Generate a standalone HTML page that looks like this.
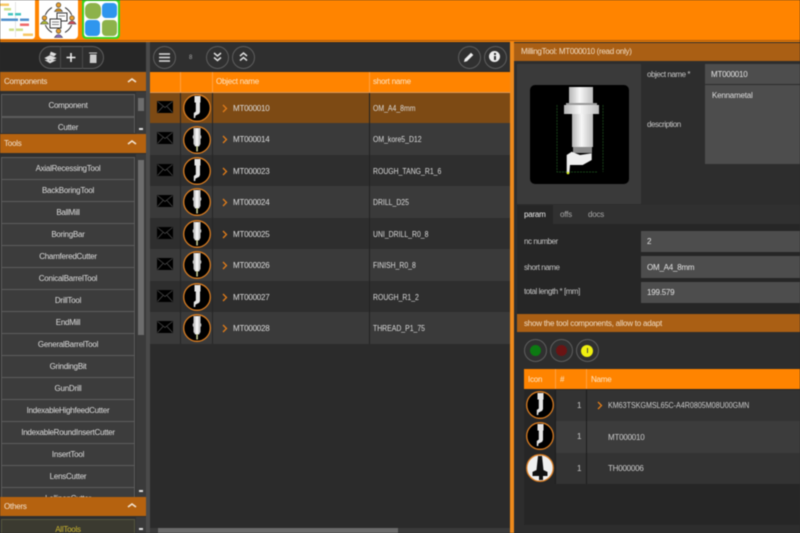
<!DOCTYPE html>
<html><head><meta charset="utf-8">
<style>
html,body{margin:0;padding:0;background:#2d2d2d}
#p{position:relative;width:800px;height:533px;overflow:hidden;background:#2b2b2b;font-family:"Liberation Sans",sans-serif;font-size:8px;color:#ddd;letter-spacing:-.22px;filter:blur(.4px)}
#p div,#p svg{position:absolute}
.t{white-space:nowrap;line-height:12px}
.l{letter-spacing:-.45px;color:#c4c4c4}
.s{transform:scaleX(.86);transform-origin:left center;letter-spacing:0}
.sec{left:0;width:146px;height:19px;background:#b5620f;color:#f2e2d0;font-size:8px;line-height:19px;text-indent:4px}
.sec svg{left:127px;top:5px}
.btn{left:1px;width:132px;height:21px;background:#3c3c3c;border:1px solid #5c5c5c;box-sizing:content-box;color:#ddd;text-align:center;line-height:21px;font-size:8px;letter-spacing:-.25px}
.rnd{width:21px;height:21px;border-radius:50%;border:1px solid #5e5e5e;background:#303030}
.row{left:150px;width:360px;height:31.5px}
.inp{background:#4d4d4d;color:#e4e4e4;font-size:8px}
</style></head><body><div id="p">
<svg width="0" height="0" style="position:absolute"><defs>
<g id="tool"><circle cx="14" cy="14" r="13.300" fill="#000" stroke="#d97d22" stroke-width="1.300"/><path d="M11.500 2h6v6.500h-.5V18l-.8 1.800-3.700 1.800-.3 2.400h-1.400v-5l2-1.500V8.500h-1.300z" fill="#e6e6e6"/></g>
<g id="tool2"><circle cx="14" cy="14" r="13.300" fill="#000" stroke="#d97d22" stroke-width="1.300"/><path d="M10.500 2h7v7l.8 1v2l-.8 1v5l-1.500 2.500h-3.800L10.500 18v-5l-.8-1v-2l.8-1z" fill="#c8c8c8"/><rect x="12.500" y="2" width="3" height="18" fill="#efefef"/><rect x="13.300" y="20" width="1.500" height="5.500" fill="#cfd59a"/></g>
<g id="mail"><rect x="0" y="0" width="16" height="12" fill="#000"/><path d="M.5.500L8 6.500 15.500.500M.5 11.500L6 5.500M15.500 11.500L10 5.500" fill="none" stroke="#4a4a4a" stroke-width=".8"/></g>
<path id="up" d="M1 5L5 2l4 3" fill="none" stroke="#f2e2d0" stroke-width="1.600"/>
<path id="chv" d="M1 1l3.500 3.500L1 8" fill="none" stroke="#e07c1a" stroke-width="1.300"/>
<linearGradient id="g" x1="0" x2="1"><stop offset="0" stop-color="#b4b4b4"/><stop offset=".45" stop-color="#f8f8f8"/><stop offset="1" stop-color="#bcbcbc"/></linearGradient>
</defs></svg>

<!-- header -->
<div style="left:0;top:0;width:800px;height:40px;background:#ff8400"></div>
<div style="left:0;top:40px;width:800px;height:1px;background:#a85a10"></div>
<div style="left:0;top:41px;width:800px;height:1.200px;background:#ff8400"></div>
<div style="left:0;top:0;width:35px;height:39px;background:#fff;border-radius:0 0 3px 0"></div>
<svg style="left:0;top:0" width="35" height="39"><rect x="15" y="2" width="1" height="35" fill="#e4e4e4"/><rect x="0" y="3.500" width="9" height="2.500" fill="#f7c766"/><rect x="4" y="8" width="7" height="2.500" fill="#cfe08a"/><rect x="8" y="13" width="5" height="2.500" fill="#45c4c0"/><rect x="15" y="13" width="6" height="2.500" fill="#45c4c0"/><rect x="1" y="18.500" width="17" height="2.500" fill="#4f8fcc"/><rect x="20" y="18.500" width="9" height="2.500" fill="#4f8fcc"/><rect x="20" y="23.500" width="9" height="2.500" fill="#ef6a6a"/><rect x="9" y="28.500" width="5" height="2.500" fill="#cfe08a"/><rect x="16" y="28.500" width="7" height="2.500" fill="#cfe08a"/><rect x="23" y="33.500" width="10" height="2.500" fill="#f7c766"/></svg>
<div style="left:39px;top:0;width:39px;height:39px;background:#fff;border-radius:0 0 4px 4px"></div>
<svg style="left:39px;top:0" width="39" height="39"><circle cx="19.500" cy="20" r="14" fill="none" stroke="#333" stroke-width="1"/>
<rect x="13" y="2" width="13" height="11" fill="#fff"/><rect x="0" y="15" width="10" height="10" fill="#fff"/><rect x="29" y="15" width="10" height="10" fill="#fff"/><rect x="13" y="28" width="13" height="11" fill="#fff"/>
<circle cx="19.500" cy="5" r="2.300" fill="#e8a030" stroke="#333" stroke-width=".6"/><path d="M15.500 11.500q4-6 8 0z" fill="#d09020" stroke="#333" stroke-width=".6"/>
<circle cx="5.500" cy="18" r="2.300" fill="#e8a030" stroke="#333" stroke-width=".6"/><path d="M1.500 24q4-6 8 0z" fill="#b0bc30" stroke="#333" stroke-width=".6"/>
<circle cx="33" cy="18" r="2.300" fill="#e8a030" stroke="#333" stroke-width=".6"/><path d="M29 24q4-6 8 0z" fill="#d04a5a" stroke="#333" stroke-width=".6"/>
<circle cx="19.500" cy="31" r="2.300" fill="#e8a030" stroke="#333" stroke-width=".6"/><path d="M15.500 37.500q4-6 8 0z" fill="#8a6ac0" stroke="#333" stroke-width=".6"/>
<rect x="18" y="13" width="10" height="8" fill="#fff" stroke="#333"/><rect x="11" y="19" width="11" height="9" fill="#fff" stroke="#333"/><path d="M13 22h7M13 24.500h7M20 16h6" stroke="#555" stroke-width=".8"/></svg>
<div style="left:82px;top:0;width:38px;height:39px;background:#3bd51f;border-radius:0 0 4px 4px"></div>
<div style="left:84px;top:1px;width:34px;height:36px;background:#fff;border-radius:3px"></div>
<div style="left:85px;top:3px;width:16px;height:16px;background:#8db24a;border-radius:6px"></div>
<div style="left:102px;top:3px;width:15px;height:15px;background:#2f96ee;border-radius:4px"></div>
<div style="left:85px;top:20px;width:15px;height:16px;background:#2f96ee;border-radius:4px"></div>
<div style="left:102px;top:20px;width:15px;height:16px;background:#8db24a;border-radius:4px"></div>

<!-- left panel -->
<div style="left:0;top:42px;width:146px;height:491px;background:#2f2f2f"></div>
<div style="left:0;top:43px;width:146px;height:28px;background:#262626"></div>
<div style="left:39px;top:46px;width:63px;height:21px;border:1px solid #5e5e5e;border-radius:12px;background:#2e2e2e"></div>
<div style="left:60px;top:46px;width:1px;height:23px;background:#4a4a4a"></div>
<div style="left:82px;top:46px;width:1px;height:23px;background:#4a4a4a"></div>
<svg style="left:44px;top:50px" width="14" height="14"><path d="M1 8l5-2.500 6 2.500-6 3zM7 2l5 2-2 2-4-1.500zM1 10l5 3 6-3" fill="#ddd" stroke="#ddd" stroke-width=".6"/></svg>
<svg style="left:65px;top:52px" width="12" height="12"><path d="M6 1v9M1.500 5.500h9" stroke="#eee" stroke-width="1.600"/></svg>
<svg style="left:87px;top:51px" width="12" height="13"><path d="M2 1.500h8v1H2zM3 3.500h6.500V12H2.800z" fill="#ccc"/></svg>

<div class="sec" style="top:72px">Components<svg width="10" height="8"><use href="#up"/></svg></div>
<div class="btn" style="top:94px;height:21px">Component</div>
<div class="btn" style="top:117px;height:15px;line-height:19px;border-bottom:0;overflow:hidden">Cutter</div>
<div style="left:136px;top:92px;width:10px;height:42px;background:#3a3a3a"></div>
<div style="left:138px;top:98px;width:6px;height:13px;background:#6d6d6d"></div>
<div style="left:139px;top:128px;width:4px;height:2px;background:#ddd"></div>

<div class="sec" style="top:134px">Tools<svg width="10" height="8"><use href="#up"/></svg></div>

<div class="btn" style="top:157px">AxialRecessingTool</div>
<div class="btn" style="top:179px">BackBoringTool</div>
<div class="btn" style="top:201px">BallMill</div>
<div class="btn" style="top:223px">BoringBar</div>
<div class="btn" style="top:245px">ChamferedCutter</div>
<div class="btn" style="top:267px">ConicalBarrelTool</div>
<div class="btn" style="top:289px">DrillTool</div>
<div class="btn" style="top:311px">EndMill</div>
<div class="btn" style="top:333px">GeneralBarrelTool</div>
<div class="btn" style="top:355px">GrindingBit</div>
<div class="btn" style="top:377px">GunDrill</div>
<div class="btn" style="top:399px">IndexableHighfeedCutter</div>
<div class="btn" style="top:421px">IndexableRoundInsertCutter</div>
<div class="btn" style="top:443px">InsertTool</div>
<div class="btn" style="top:465px">LensCutter</div>
<div class="btn" style="top:487px;height:9px;border-bottom:0;overflow:hidden">LollipopCutter</div>
<div style="left:136px;top:154px;width:10px;height:343px;background:#3a3a3a"></div>
<div style="left:138px;top:160px;width:6px;height:175px;background:#6d6d6d"></div>
<div style="left:139px;top:490px;width:4px;height:2px;background:#ddd"></div>

<div class="sec" style="top:497px">Others<svg width="10" height="8"><use href="#up"/></svg></div>
<div class="btn" style="top:519px;height:16px;color:#c9b32e;background:#3b3a30;border-color:#55553f;line-height:20px">AllTools</div>
<div style="left:136px;top:517px;width:10px;height:16px;background:#3a3a3a"></div>
<div style="left:139px;top:528px;width:4px;height:2px;background:#ddd"></div>

<!-- middle -->
<div style="left:146px;top:42px;width:4px;height:491px;background:#4a4a4a"></div>
<div style="left:150px;top:43px;width:360px;height:28px;background:#2f2f2f"></div>
<div class="rnd" style="left:153px;top:46px"></div>
<svg style="left:158px;top:52px" width="13" height="11"><path d="M1 2h11M1 5.500h11M1 9h11" stroke="#ddd" stroke-width="1.500"/></svg>
<div class="t" style="left:189px;top:52px;font-size:6px;color:#aaa">8</div>
<div class="rnd" style="left:206px;top:46px"></div>
<svg style="left:212px;top:51px" width="11" height="12"><path d="M2 2l3.500 3L9 2M2 6.500l3.500 3L9 6.500" fill="none" stroke="#ddd" stroke-width="1.500"/></svg>
<div class="rnd" style="left:232px;top:46px"></div>
<svg style="left:238px;top:51px" width="11" height="12"><path d="M2 5l3.500-3L9 5M2 9.500l3.500-3L9 9.500" fill="none" stroke="#ddd" stroke-width="1.500"/></svg>
<div class="rnd" style="left:458px;top:46px"></div>
<svg style="left:463px;top:51px" width="12" height="12"><path d="M1 11l.7-3L8 1.700 10.300 4 4 10.300z" fill="#eee"/></svg>
<div class="rnd" style="left:484px;top:46px"></div>
<div style="left:489px;top:51px;width:11px;height:11px;border-radius:50%;background:#eee"></div>
<div style="left:494px;top:53px;width:1.500px;height:1.500px;background:#333"></div>
<div style="left:494px;top:55.500px;width:1.500px;height:4px;background:#333"></div>

<div style="left:150px;top:72px;width:360px;height:20px;background:#ff8400"></div>
<div style="left:180px;top:72px;width:1px;height:20px;background:#ffa040"></div>
<div style="left:212px;top:72px;width:1px;height:20px;background:#ffa040"></div>
<div style="left:369px;top:72px;width:1px;height:20px;background:#ffa040"></div>
<div class="t" style="left:216px;top:76px;color:#fde6c8">Object name</div>
<div class="t" style="left:373px;top:76px;color:#fde6c8">short name</div>
<div style="left:150px;top:92px;width:360px;height:1px;background:#d9975a"></div>

<div class="row" style="top:93px;height:30px;background:#7d4a14"></div>
<div class="row" style="top:123px;height:32px;background:#3a3a3a"></div>
<div class="row" style="top:155px;height:31px;background:#2e2e2e"></div>
<div class="row" style="top:186px;height:32px;background:#3a3a3a"></div>
<div class="row" style="top:218px;height:31px;background:#2e2e2e"></div>
<div class="row" style="top:249px;height:32px;background:#3a3a3a"></div>
<div class="row" style="top:281px;height:31px;background:#2e2e2e"></div>
<div class="row" style="top:312px;height:32px;background:#3a3a3a"></div>
<div style="left:150px;top:344px;width:360px;height:184px;background:#2b2b2b"></div>
<div style="left:180px;top:93px;width:1px;height:251px;background:#262626"></div>
<div style="left:212px;top:93px;width:1px;height:251px;background:#262626"></div>
<div style="left:369px;top:93px;width:1px;height:251px;background:#222"></div>

<svg style="left:157px;top:101px" width="16" height="12"><use href="#mail"/></svg>
<svg style="left:157px;top:132px" width="16" height="12"><use href="#mail"/></svg>
<svg style="left:157px;top:164px" width="16" height="12"><use href="#mail"/></svg>
<svg style="left:157px;top:195px" width="16" height="12"><use href="#mail"/></svg>
<svg style="left:157px;top:227px" width="16" height="12"><use href="#mail"/></svg>
<svg style="left:157px;top:258px" width="16" height="12"><use href="#mail"/></svg>
<svg style="left:157px;top:290px" width="16" height="12"><use href="#mail"/></svg>
<svg style="left:157px;top:321px" width="16" height="12"><use href="#mail"/></svg>

<svg style="left:183px;top:94px" width="28" height="28" overflow="visible"><use href="#tool"/></svg>
<svg style="left:183px;top:126px" width="28" height="28" overflow="visible"><use href="#tool2"/></svg>
<svg style="left:183px;top:157px" width="28" height="28" overflow="visible"><use href="#tool"/></svg>
<svg style="left:183px;top:188px" width="28" height="28" overflow="visible"><use href="#tool2"/></svg>
<svg style="left:183px;top:220px" width="28" height="28" overflow="visible"><use href="#tool2"/></svg>
<svg style="left:183px;top:251px" width="28" height="28" overflow="visible"><use href="#tool2"/></svg>
<svg style="left:183px;top:283px" width="28" height="28" overflow="visible"><use href="#tool"/></svg>
<svg style="left:183px;top:314px" width="28" height="28" overflow="visible"><use href="#tool2"/></svg>

<svg style="left:222px;top:104px" width="6" height="9"><use href="#chv"/></svg>
<svg style="left:222px;top:135px" width="6" height="9"><use href="#chv"/></svg>
<svg style="left:222px;top:167px" width="6" height="9"><use href="#chv"/></svg>
<svg style="left:222px;top:198px" width="6" height="9"><use href="#chv"/></svg>
<svg style="left:222px;top:230px" width="6" height="9"><use href="#chv"/></svg>
<svg style="left:222px;top:261px" width="6" height="9"><use href="#chv"/></svg>
<svg style="left:222px;top:293px" width="6" height="9"><use href="#chv"/></svg>
<svg style="left:222px;top:324px" width="6" height="9"><use href="#chv"/></svg>

<div class="t" style="left:233px;top:103px">MT000010</div>
<div class="t" style="left:233px;top:134px">MT000014</div>
<div class="t" style="left:233px;top:166px">MT000023</div>
<div class="t" style="left:233px;top:197px">MT000024</div>
<div class="t" style="left:233px;top:229px">MT000025</div>
<div class="t" style="left:233px;top:260px">MT000026</div>
<div class="t" style="left:233px;top:292px">MT000027</div>
<div class="t" style="left:233px;top:323px">MT000028</div>
<div class="t s" style="left:373px;top:103px">OM_A4_8mm</div>
<div class="t s" style="left:373px;top:134px">OM_kore5_D12</div>
<div class="t s" style="left:373px;top:166px">ROUGH_TANG_R1_6</div>
<div class="t s" style="left:373px;top:197px">DRILL_D25</div>
<div class="t s" style="left:373px;top:229px">UNI_DRILL_R0_8</div>
<div class="t s" style="left:373px;top:260px">FINISH_R0_8</div>
<div class="t s" style="left:373px;top:292px">ROUGH_R1_2</div>
<div class="t s" style="left:373px;top:323px">THREAD_P1_75</div>
<div style="left:150px;top:528px;width:360px;height:5px;background:#3a3a3a"></div>
<div style="left:158px;top:528px;width:240px;height:5px;background:#6a6a6a"></div>

<!-- right panel -->
<div style="left:510px;top:42px;width:4px;height:491px;background:#ee8a1c"></div>
<div style="left:514px;top:42px;width:286px;height:491px;background:#2d2d2d"></div>
<div style="left:514px;top:43px;width:286px;height:18px;background:#aa5f14"></div>
<div class="t" style="left:521px;top:46px;color:#f0dcc4;letter-spacing:-.3px">MillingTool: MT000010 (read only)</div>

<div style="left:517px;top:64px;width:124px;height:140px;background:#3a3a3a"></div>
<div style="left:530px;top:85px;width:99px;height:99px;background:#000;border-radius:5px"></div>
<svg style="left:530px;top:85px" width="99" height="99">
<path d="M27 20v67h41M73 20v67" fill="none" stroke="#1f5a1f" stroke-width=".7" stroke-dasharray="2 1"/>
<path d="M39 2h24v16H39z" fill="url(#g)"/><path d="M34 20h35v9H34z" fill="url(#g)"/><path d="M36 18h31v2H36z" fill="#999"/><path d="M42 29h21v33H42z" fill="url(#g)"/><path d="M43 62h19v6H43z" fill="#8a8a8a"/>
<path d="M36.700 70l5-3.300 8.300 3.300 11.700-1.700V75l-9 5H40l-.7 8.300h-2.600z" fill="#efefef"/><circle cx="38" cy="88" r="1.300" fill="#d8ee20"/></svg>

<div class="t l" style="left:647px;top:69px">object name *</div>
<div class="inp" style="left:705px;top:64px;width:95px;height:20px;line-height:22px;text-indent:6px">MT000010</div>
<div class="inp" style="left:705px;top:85px;width:95px;height:79px;line-height:22px;text-indent:7px;color:#ddd">Kennametal</div>
<div class="t l" style="left:647px;top:119px">description</div>

<div style="left:517px;top:205px;width:283px;height:19px;background:#303030"></div>
<div style="left:517px;top:205px;width:36px;height:19px;background:#262626"></div>
<div class="t" style="left:524px;top:209px;color:#eee">param</div>
<div class="t" style="left:560px;top:209px;color:#a8a8a8">offs</div>
<div class="t" style="left:588px;top:209px;color:#a8a8a8">docs</div>
<div style="left:517px;top:224px;width:283px;height:90px;background:#262626"></div>
<div class="t l" style="left:524px;top:236px">nc number</div>
<div class="inp" style="left:641px;top:231px;width:159px;height:21px;line-height:22px;text-indent:6px">2</div>
<div class="t l" style="left:524px;top:262px">short name</div>
<div class="inp" style="left:641px;top:256px;width:159px;height:22px;line-height:23px;text-indent:6px">OM_A4_8mm</div>
<div class="t l" style="left:524px;top:286px">total length * [mm]</div>
<div class="inp" style="left:641px;top:282px;width:159px;height:21px;line-height:21px;text-indent:6px">199.579</div>

<div style="left:517px;top:314px;width:283px;height:18px;background:#aa5f14"></div>
<div class="t" style="left:524px;top:318px;color:#f0dcc4">show the tool components, allow to adapt</div>

<div class="rnd" style="left:524px;top:339px"></div>
<div style="left:530px;top:345px;width:11px;height:11px;border-radius:50%;background:#0c7a12"></div>
<div class="rnd" style="left:550px;top:339px"></div>
<div style="left:556px;top:345px;width:11px;height:11px;border-radius:50%;background:#6a1414"></div>
<div class="rnd" style="left:576px;top:339px"></div>
<div style="left:581px;top:345px;width:12px;height:12px;border-radius:50%;background:#efef10"></div>
<div style="left:586.500px;top:348px;width:1.200px;height:5px;background:#444"></div>

<div style="left:524px;top:369px;width:276px;height:20px;background:#ff8400"></div>
<div style="left:555px;top:369px;width:1px;height:20px;background:#ffa040"></div>
<div style="left:586px;top:369px;width:1px;height:20px;background:#ffa040"></div>
<div class="t" style="left:528px;top:374px;color:#fde6c8">Icon</div>
<div class="t" style="left:560px;top:374px;color:#fde6c8">#</div>
<div class="t" style="left:591px;top:374px;color:#fde6c8">Name</div>

<div style="left:524px;top:389px;width:276px;height:136px;background:#262626"></div>
<div style="left:556px;top:390px;width:244px;height:31px;background:#333"></div>
<div style="left:556px;top:421px;width:244px;height:32px;background:#3c3c3c"></div>
<div style="left:556px;top:453px;width:244px;height:31px;background:#333"></div>
<div style="left:555px;top:389px;width:1px;height:95px;background:#1d1d1d"></div>
<div style="left:586px;top:389px;width:1px;height:95px;background:#1d1d1d"></div>
<svg style="left:526px;top:391px" width="28" height="28" overflow="visible"><use href="#tool"/></svg>
<svg style="left:526px;top:422px" width="28" height="28" overflow="visible"><use href="#tool"/></svg>
<svg style="left:526px;top:454px" width="28" height="28" overflow="visible"><circle cx="14" cy="14" r="13.300" fill="#f0f0f0" stroke="#d97d22" stroke-width="1.300"/><path d="M12 2h4l1.500 14 4 2v4h-4.500v4h-4v-4H6.500v-4l4-2z" fill="#111"/></svg>
<div class="t" style="left:577px;top:400px;color:#ccc">1</div>
<div class="t" style="left:577px;top:431px;color:#ccc">1</div>
<div class="t" style="left:577px;top:463px;color:#ccc">1</div>
<svg style="left:597px;top:401px" width="6" height="9"><use href="#chv"/></svg>
<div class="t s" style="left:608px;top:400px;color:#ccc;transform:scaleX(.89)">KM63TSKGMSL65C-A4R0805M08U00GMN</div>
<div class="t" style="left:608px;top:432px;color:#ccc">MT000010</div>
<div class="t" style="left:608px;top:463px;color:#ccc">TH000006</div>
</div></body></html>
